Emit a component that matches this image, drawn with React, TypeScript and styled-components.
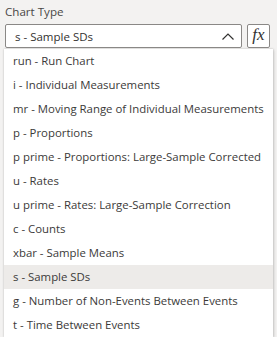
import React from 'react';
import styled, { createGlobalStyle } from 'styled-components';

const options = [
  'run - Run Chart',
  'i - Individual Measurements',
  'mr - Moving Range of Individual Measurements',
  'p - Proportions',
  'p prime - Proportions: Large-Sample Corrected',
  'u - Rates',
  'u prime - Rates: Large-Sample Correction',
  'c - Counts',
  'xbar - Sample Means',
  's - Sample SDs',
  'g - Number of Non-Events Between Events',
  't - Time Between Events',
];

const selected = 's - Sample SDs';

const App = () => {
  return (
    <>
      <GlobalStyle />
      <Container>
        <Label>Chart Type</Label>
        <SelectRow>
          <Select>
            <span className="value">{selected}</span>
            <svg width="12" height="7" viewBox="0 0 12 7" className="chevron">
              <path d="M0.5 6.5 L6 1 L11.5 6.5" fill="none" stroke="#323130" strokeWidth="1.2" />
            </svg>
          </Select>
          <FxButton>fx</FxButton>
        </SelectRow>
        <Menu>
          {options.map((item) => (
            <Option key={item} active={item === selected}>
              {item}
            </Option>
          ))}
        </Menu>
      </Container>
    </>
  );
};

export default App;

const GlobalStyle = createGlobalStyle`
  html, body {
    margin: 0;
    padding: 0;
    background: #f3f2f1;
  }
  body {
    font-family: 'Open Sans', 'Noto Sans', sans-serif;
    color: #323130;
  }
`;

const Container = styled.div`
  width: 277px;
  height: 337px;
  overflow: hidden;
  padding: 3px 0 0 5px;
  box-sizing: border-box;
  position: relative;
`;

const Label = styled.div`
  font-size: 11.6px;
  line-height: 18px;
  color: #4a4846;
  margin-bottom: 3px;
`;

const SelectRow = styled.div`
  display: flex;
  align-items: center;
  gap: 5px;
`;

const Select = styled.div`
  width: 237px;
  height: 24px;
  box-sizing: border-box;
  border: 1px solid #8a8886;
  border-radius: 2px;
  background: #ffffff;
  display: flex;
  align-items: center;
  justify-content: space-between;
  padding: 0 6px 0 9px;
  font-size: 11.5px;
  .chevron {
    display: block;
    margin-right: 1px;
  }
`;

const FxButton = styled.div`
  width: 23px;
  height: 24px;
  box-sizing: border-box;
  border: 1px solid #8a8886;
  border-radius: 2px;
  background: #ffffff;
  display: flex;
  align-items: center;
  justify-content: center;
  font-family: 'Liberation Serif', 'DejaVu Serif', serif;
  font-style: italic;
  font-size: 17px;
  color: #323130;
  padding-bottom: 2px;
`;

const Menu = styled.ul`
  list-style: none;
  margin: 1px 0 0 -1px;
  padding: 0;
  width: 269px;
  background: #ffffff;
  box-shadow: 0 0 2px rgba(0, 0, 0, 0.18), 1px 1px 3px rgba(0, 0, 0, 0.14);
`;

const Option = styled.li<{ active?: boolean }>`
  height: 24px;
  line-height: 24px;
  padding-left: 9px;
  font-size: 11.4px;
  white-space: nowrap;
  color: #3b3a39;
  background: ${({ active }) => (active ? '#edebe9' : 'transparent')};
`;
